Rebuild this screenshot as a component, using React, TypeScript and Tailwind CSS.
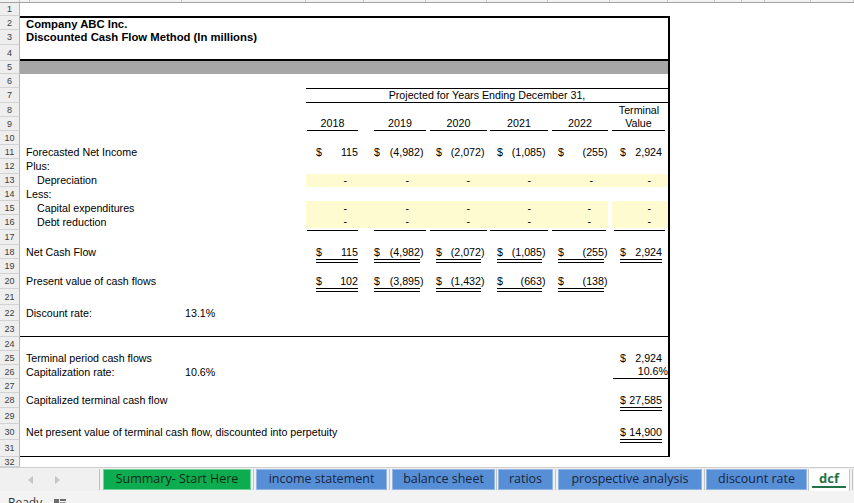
import React from 'react';

type Kids = { children?: React.ReactNode };

const H: Record<number, string> = {
  10: 'h-[10px]',
  13: 'h-[13px]',
  14: 'h-[14px]',
  15: 'h-[15px]',
  16: 'h-[16px]',
  17: 'h-[17px]',
};

// widths of the year columns D..I
const COL = ['w-[58px]', 'w-[62px]', 'w-[61px]', 'w-[61px]', 'w-[62px]', 'w-[58px]'];
// where the single underlines sit inside each year column
const UL = ['ml-[1px] mr-[6px]', 'ml-[10px]', 'ml-[4px]', 'ml-[3px]', 'ml-[4px] mr-[2px]', 'ml-[2px] mr-[3px]'];
const YEARS = ['2018', '2019', '2020', '2021', '2022'];
const YELLOW = 'bg-[#fdfbcf]';

function Row({ n, h, box = true, className = '', children }: Kids & { n: number; h: number; box?: boolean; className?: string }) {
  return (
    <div className={`flex shrink-0 ${H[h]}`}>
      <div className="flex w-[20px] shrink-0 items-center justify-center border-r border-b border-[#d2d2d2] border-r-[#b4b4b4] bg-[#eeeeee] pt-px text-[9px] leading-none text-[#3c3c3c]">
        {n}
      </div>
      <div className={`flex w-[650px] shrink-0 ${box ? 'border-r-2 border-r-black' : ''} ${className}`}>{children}</div>
    </div>
  );
}

function Label({ text, c, indent, bold }: { text?: string; c?: string; indent?: boolean; bold?: boolean }) {
  return (
    <>
      <div
        className={`flex w-[162px] shrink-0 items-center whitespace-nowrap ${indent ? 'pl-[17px]' : 'pl-[6px]'} ${bold ? 'text-[11.3px] font-bold' : ''}`}
      >
        {text}
      </div>
      <div className="flex w-[124px] shrink-0 items-center pl-[3px]">{c}</div>
    </>
  );
}

function Money({ i, v, dbl }: { i: number; v?: string; dbl?: boolean }) {
  if (!v) return <div className={`${COL[i]} shrink-0`} />;
  const neg = v.endsWith(')');
  return (
    <div className={`flex ${COL[i]} shrink-0 items-center pl-[10px] pr-[2px]`}>
      <div className={`flex flex-1 justify-between ${dbl ? 'mb-[-4px] border-b-4 border-double border-black' : ''}`}>
        <span>$</span>
        <span>{neg ? v.slice(0, -1) : v}</span>
      </div>
      <span className="w-[4px] shrink-0">{neg ? ')' : ''}</span>
    </div>
  );
}

function Dashes({ split, ul }: { split?: boolean; ul?: boolean }) {
  return (
    <>
      {COL.map((w, i) => (
        <div
          key={i}
          className={`flex ${w} shrink-0 flex-col ${split && i === 4 ? 'border-r-2 border-r-white' : ''} ${split && i === 5 ? 'border-l-2 border-l-white' : ''}`}
        >
          <div className={`flex flex-1 items-center justify-end pr-[17px] ${YELLOW}`}>-</div>
          {ul && (
            <div className="h-[4px] shrink-0 bg-white pt-[2px]">
              <div className={`h-px bg-black ${UL[i]}`} />
            </div>
          )}
        </div>
      ))}
    </>
  );
}

function ColHeader() {
  const ws = ['w-[20px]', 'w-[10px]', 'w-[152px]', 'w-[124px]', 'w-[58px]', 'w-[62px]', 'w-[61px]', 'w-[61px]', 'w-[62px]', 'w-[58px]', 'w-[47px]', 'w-[27px]', 'w-[23px]', 'w-[46px]', 'w-[43px]'];
  return (
    <div className="flex h-[3px] shrink-0 border-b border-[#a2a2a2] bg-[#f2f2f2]">
      {ws.map((w, i) => (
        <div key={i} className={`${w} shrink-0 border-r border-[#c8c8c8]`} />
      ))}
    </div>
  );
}

function Sep({ w }: { w: string }) {
  return (
    <div className={`flex h-[21px] ${w} shrink-0 justify-center`}>
      <div className="w-px bg-[#c4c4c4]" />
    </div>
  );
}

function Tab({ w, label, green }: { w: string; label: string; green?: boolean }) {
  return (
    <div
      className={`flex h-[21px] ${w} shrink-0 items-center justify-center border ${green ? 'border-[#6fd39a] bg-[#0eac50] text-[#0e2b16]' : 'border-[#94b6e4] bg-[#578fd6] text-[#17243f]'}`}
    >
      {label}
    </div>
  );
}

function Tabs() {
  return (
    <div className="flex h-[24px] shrink-0 border-t border-[#cdcdcd] bg-[#f0f0f0] pt-px font-['Open_Sans','Noto_Sans',sans-serif] text-[12.5px] leading-none">
      <div className="flex w-[99px] shrink-0 items-center gap-[22px] pl-[28px]">
        <svg width="5" height="8" viewBox="0 0 5 8">
          <path d="M5 0L0 4L5 8Z" fill="#c6c6c6" />
        </svg>
        <svg width="5" height="8" viewBox="0 0 5 8">
          <path d="M0 0L5 4L0 8Z" fill="#c6c6c6" />
        </svg>
      </div>
      <div className="mr-[3px] h-[21px] w-px bg-[#bdbdbd]" />
      <Tab w="w-[148px]" label="Summary- Start Here" green />
      <Sep w="w-[5px]" />
      <Tab w="w-[131px]" label="income statement" />
      <Sep w="w-[5px]" />
      <Tab w="w-[103px]" label="balance sheet" />
      <Sep w="w-[3px]" />
      <Tab w="w-[55px]" label="ratios" />
      <Sep w="w-[5px]" />
      <Tab w="w-[144px]" label="prospective analysis" />
      <Sep w="w-[4px]" />
      <Tab w="w-[101px]" label="discount rate" />
      <div className="ml-px flex h-[22px] w-[42px] shrink-0 flex-col items-center border-x border-[#c6c6c6] bg-white">
        <span className="flex flex-1 items-center pt-px text-[13px] font-bold text-[#217346]">dcf</span>
        <div className="mb-[3px] h-[2px] w-[34px] bg-[#217346]" />
      </div>
      <Sep w="w-[4px]" />
    </div>
  );
}

export default function App() {
  return (
    <div className="flex h-[503px] w-[854px] flex-col overflow-hidden bg-white font-['Liberation_Sans',Arial,sans-serif] text-[10.7px] leading-[13px] text-black">
      <ColHeader />
      <Row n={1} h={13} box={false} />
      <Row n={2} h={14} className="border-t-2 border-t-black">
        <Label bold text="Company ABC Inc." />
      </Row>
      <Row n={3} h={15}>
        <Label bold text="Discounted Cash Flow Method (In millions)" />
      </Row>
      <Row n={4} h={16} className="border-b-2 border-b-black" />
      <Row n={5} h={13} className="bg-[#a6a6a6]" />
      <Row n={6} h={14} />
      <Row n={7} h={15}>
        <Label />
        <div className="flex w-[362px] shrink-0 items-center justify-center border-y border-black">
          Projected for Years Ending December 31,
        </div>
      </Row>
      <Row n={8} h={14}>
        <Label />
        <div className="w-[304px] shrink-0" />
        <div className="flex w-[58px] shrink-0 items-center justify-center">Terminal</div>
      </Row>
      <Row n={9} h={14}>
        <Label />
        {[...YEARS, 'Value'].map((y, i) => (
          <div key={y} className={`flex ${COL[i]} shrink-0 flex-col`}>
            <div className={`flex flex-1 items-center justify-center ${UL[i]}`}>{y}</div>
            <div className={`h-px shrink-0 bg-black ${UL[i]}`} />
          </div>
        ))}
      </Row>
      <Row n={10} h={14} />
      <Row n={11} h={14}>
        <Label text="Forecasted Net Income" />
        {['115', '(4,982)', '(2,072)', '(1,085)', '(255)', '2,924'].map((v, i) => (
          <Money key={i} i={i} v={v} />
        ))}
      </Row>
      <Row n={12} h={15}>
        <Label text="Plus:" />
      </Row>
      <Row n={13} h={13}>
        <Label indent text="Depreciation" />
        <Dashes />
      </Row>
      <Row n={14} h={14}>
        <Label text="Less:" />
      </Row>
      <Row n={15} h={14}>
        <Label indent text="Capital expenditures" />
        <Dashes split />
      </Row>
      <Row n={16} h={15}>
        <Label indent text="Debt reduction" />
        <Dashes split ul />
      </Row>
      <Row n={17} h={15} />
      <Row n={18} h={14}>
        <Label text="Net Cash Flow" />
        {['115', '(4,982)', '(2,072)', '(1,085)', '(255)', '2,924'].map((v, i) => (
          <Money key={i} i={i} v={v} dbl />
        ))}
      </Row>
      <Row n={19} h={15} />
      <Row n={20} h={15}>
        <Label text="Present value of cash flows" />
        {['102', '(3,895)', '(1,432)', '(663)', '(138)', ''].map((v, i) => (
          <Money key={i} i={i} v={v} dbl />
        ))}
      </Row>
      <Row n={21} h={16} />
      <Row n={22} h={16}>
        <Label text="Discount rate:" c="13.1%" />
      </Row>
      <Row n={23} h={16} className="border-b border-b-black" />
      <Row n={24} h={14} />
      <Row n={25} h={14}>
        <Label text="Terminal period cash flows" />
        <div className="w-[304px] shrink-0" />
        <Money i={5} v="2,924" />
      </Row>
      <Row n={26} h={14}>
        <Label text="Capitalization rate:" c="10.6%" />
        <div className="w-[304px] shrink-0" />
        <div className="flex w-[58px] shrink-0 flex-col">
          <div className="flex flex-1 items-center justify-end">10.6%</div>
          <div className="ml-[3px] h-px shrink-0 bg-black" />
        </div>
      </Row>
      <Row n={27} h={14} />
      <Row n={28} h={15}>
        <Label text="Capitalized terminal cash flow" />
        <div className="w-[304px] shrink-0" />
        <Money i={5} v="27,585" dbl />
      </Row>
      <Row n={29} h={16} />
      <Row n={30} h={16}>
        <Label text="Net present value of terminal cash flow, discounted into perpetuity" />
        <div className="w-[304px] shrink-0" />
        <Money i={5} v="14,900" dbl />
      </Row>
      <Row n={31} h={17} className="border-b border-b-black" />
      <Row n={32} h={10} box={false} />
      <Tabs />
      <div className="flex h-[40px] shrink-0 items-start gap-[12px] bg-[#f3f3f3] pl-[8px] pt-[4px] font-['Open_Sans','Noto_Sans',sans-serif] text-[12px] leading-[16px] text-[#333333]">
        <span>Ready</span>
        <svg width="13" height="10" viewBox="0 0 13 10" className="mt-[3px]">
          <rect x="0" y="1" width="5" height="6" fill="#6b6b6b" />
          <rect x="6" y="1" width="6" height="2" fill="#6b6b6b" />
          <rect x="6" y="4" width="6" height="1" fill="#9a9a9a" />
        </svg>
      </div>
    </div>
  );
}
